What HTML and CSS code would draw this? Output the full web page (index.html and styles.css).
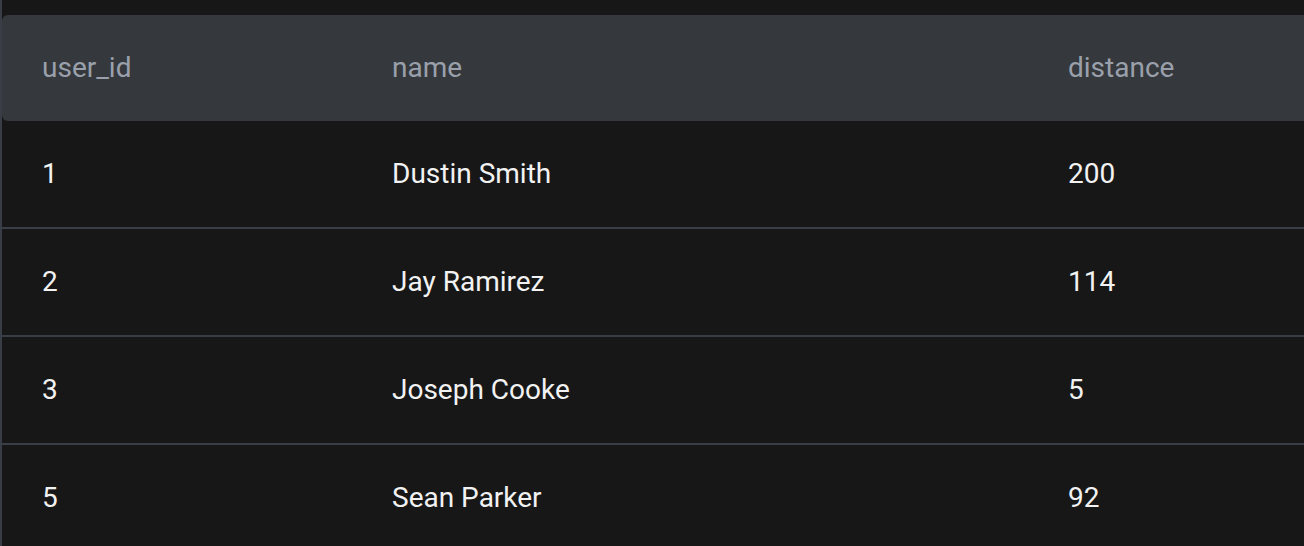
FILE: index.html
```html
<!DOCTYPE html>
<html>
<head>
<meta charset="utf-8">
<link rel="stylesheet" href="styles.css">
</head>
<body>
<div class="wrap">
  <div class="table">
    <div class="row head">
      <div class="c c1">user_id</div>
      <div class="c c2">name</div>
      <div class="c c3">distance</div>
    </div>
    <div class="row">
      <div class="c c1">1</div>
      <div class="c c2">Dustin Smith</div>
      <div class="c c3">200</div>
    </div>
    <div class="row">
      <div class="c c1">2</div>
      <div class="c c2">Jay Ramirez</div>
      <div class="c c3">114</div>
    </div>
    <div class="row">
      <div class="c c1">3</div>
      <div class="c c2">Joseph Cooke</div>
      <div class="c c3">5</div>
    </div>
    <div class="row">
      <div class="c c1">5</div>
      <div class="c c2">Sean Parker</div>
      <div class="c c3">92</div>
    </div>
  </div>
</div>
</body>
</html>
```
FILE: styles.css
```css
html, body {
  margin: 0;
  padding: 0;
  background: #171718;
  overflow: hidden;
}
.wrap {
  width: 1304px;
  height: 546px;
  padding-top: 15px;
  box-sizing: border-box;
  border-left: 2px solid #393d45;
  overflow: hidden;
}
.table {
  width: 100%;
  font-family: Roboto, "Liberation Sans", sans-serif;
  font-size: 28px;
}
.row {
  display: flex;
  align-items: center;
  height: 106px;
  border-bottom: 2px solid #393d45;
  color: #f2f2f2;
}
.row.head {
  height: 106px;
  border-bottom: none;
  background: #35383c;
  border-radius: 6px 0 0 6px;
  color: #9aa0ab;
}
.c {
  box-sizing: border-box;
  padding-bottom: 2px;
}
.c1 { width: 390px; padding-left: 40px; }
.c2 { width: 676px; }
.c3 { flex: 1; }
```
